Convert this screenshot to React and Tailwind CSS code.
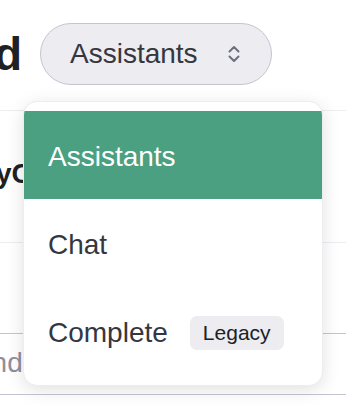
import { useState } from 'react';

const modes = ['Assistants', 'Chat', 'Complete'];

function UpDownIcon() {
  return (
    <svg width="16" height="20" viewBox="0 0 16 20" fill="none" stroke="#6e6e80" strokeWidth="2" strokeLinecap="round" strokeLinejoin="round">
      <path d="M3.5 7.5L8 3l4.5 4.5" />
      <path d="M3.5 12.5L8 17l4.5-4.5" />
    </svg>
  );
}

export default function App() {
  const [mode, setMode] = useState('Assistants');

  return (
    <div className="relative w-[346px] h-[409px] overflow-hidden bg-white text-[#353740] font-['Liberation_Sans',Arial,sans-serif]">
      {/* page behind the menu */}
      <div className="h-[111px] border-b border-[#ececf1] flex items-start pt-[23px] gap-[18px]">
        <div className="w-[22px] overflow-hidden flex justify-end shrink-0 h-[62px] items-center">
          <h1 className="text-[46px] leading-[46px] font-bold text-[#202123] whitespace-nowrap">Playground</h1>
        </div>
        <button className="h-[62px] flex items-center gap-[28px] pl-[29px] pr-[29px] rounded-full border border-[#c5c5d2] bg-[#ececf1] text-[28px] text-[#353740]">
          <span>{mode}</span>
          <UpDownIcon />
        </button>
      </div>
      <div className="h-[132px] border-b border-[#ececf1] pt-[47px]">
        <p className="-ml-[4px] text-[28px] leading-[32px] font-bold text-[#202123] whitespace-nowrap">yCompany</p>
      </div>
      <div className="h-[91px] border-b border-[#c5c5d2]"></div>
      <div className="h-[61px] border-b border-[#c5c5d2] pt-[13px]">
        <p className="-ml-[24px] text-[28px] leading-[32px] text-[#8e8ea0] whitespace-nowrap">and more</p>
      </div>

      {/* dropdown menu */}
      <div className="absolute left-[23px] top-[101px] w-[300px] h-[285px] pt-[9px] bg-white rounded-[14px] border border-[#ececf1] shadow-[0_4px_18px_rgba(0,0,0,0.12)] overflow-hidden">
        {modes.map((m) => (
          <div
            key={m}
            onClick={() => setMode(m)}
            className={
              m === mode
                ? 'h-[88px] -mx-px flex items-center gap-[22px] pt-[4px] px-[25px] bg-[#4aa080] text-white text-[28px]'
                : 'h-[88px] -mx-px flex items-center gap-[22px] pt-[4px] px-[25px] text-[#353740] text-[28px]'
            }
          >
            <span>{m}</span>
            {m === 'Complete' && (
              <span className="h-[34px] flex items-center px-[13px] rounded-[7px] bg-[#ececf1] text-[21px] text-[#202123]">Legacy</span>
            )}
          </div>
        ))}
      </div>
    </div>
  );
}
